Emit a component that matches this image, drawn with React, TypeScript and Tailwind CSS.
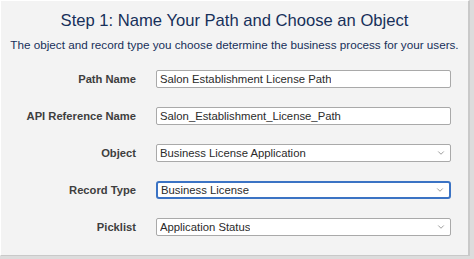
import { ChevronDown } from 'lucide-react';

const ROWS = [
    { label: 'Path Name', value: 'Salon Establishment License Path', kind: 'input' },
    { label: 'API Reference Name', value: 'Salon_Establishment_License_Path', kind: 'input' },
    { label: 'Object', value: 'Business License Application', kind: 'select' },
    { label: 'Record Type', value: 'Business License', kind: 'select', focused: true },
    { label: 'Picklist', value: 'Application Status', kind: 'select' },
];

export default function App() {
    return (
        <div
            className="w-[474px] h-[259px] bg-[#dcdcdc] overflow-hidden"
            style={{ fontFamily: '"Liberation Sans", Arial, sans-serif' }}
        >
            <div className="w-[470px] h-[256px] bg-[#f3f3f3] border-r-2 border-b border-[#c9c9c9] border-l border-l-white border-t border-t-white">
                <div className="pt-[8px] text-center">
                    <h2 className="text-[16.6px] leading-[24px] text-[#17305a]">
                        Step 1: Name Your Path and Choose an Object
                    </h2>
                    <p className="mt-[4px] text-[11.7px] leading-[16px] text-[#17305a] whitespace-nowrap">
                        The object and record type you choose determine the business process for your users.
                    </p>
                </div>
                <div className="mt-[17px] flex flex-col gap-[19px]">
                    {ROWS.map((row) => (
                        <div key={row.label} className="flex items-center h-[18px]">
                            <div className="w-[135px] text-right text-[11.2px] font-bold text-[#3e3e3e]">
                                {row.label}
                            </div>
                            <div
                                className={
                                    'ml-[20px] w-[295px] h-[18px] bg-white flex items-center justify-between pl-[3px] pr-[4px] text-[11.3px] text-[#2b2b2b] ' +
                                    (row.focused
                                        ? 'border-2 border-[#3b73c4] rounded-[3px]'
                                        : 'border border-[#a9a9a9] rounded-[2px]')
                                }
                            >
                                <span className="truncate">{row.value}</span>
                                {row.kind === 'select' && (
                                    <ChevronDown className="w-[10px] h-[10px] text-[#8a8a8a]" strokeWidth={2} />
                                )}
                            </div>
                        </div>
                    ))}
                </div>
            </div>
        </div>
    );
}
